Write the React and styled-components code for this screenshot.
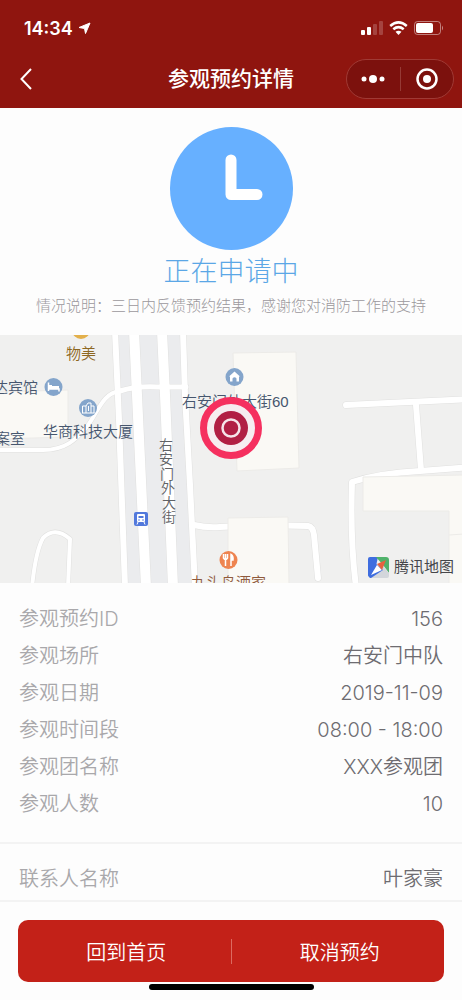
import styled, { createGlobalStyle } from 'styled-components';

const visitInfo = [
  { label: '参观预约ID', value: '156' },
  { label: '参观场所', value: '右安门中队' },
  { label: '参观日期', value: '2019-11-09' },
  { label: '参观时间段', value: '08:00 - 18:00' },
  { label: '参观团名称', value: 'XXX参观团' },
  { label: '参观人数', value: '10' },
];

const contactInfo = [{ label: '联系人名称', value: '叶家豪' }];

// x, baseline of each character of the street name
const streetName = [
  ['右', 166, 115],
  ['安', 166, 129],
  ['门', 167, 144],
  ['外', 168, 158],
  ['大', 169, 173],
  ['街', 169, 187],
];

const roads = [
  { d: 'M-4 115H43C66 115 76 104 86 93C98 78 102 58 120 56', w: 4 },
  { d: 'M32 252C34 232 38 212 43 203Q55 191 70 204L68 252', w: 4 },
  { d: 'M120 56Q136 51 157 52H186', w: 5 },
  { d: 'M115 -4L119 85L125 252', w: 6 },
  { d: 'M134 -4L137 60L146 252', w: 10 },
  { d: 'M162 -4L165 60L173 252', w: 10 },
  { d: 'M183 -4L185 60L190 150L195 252', w: 6 },
  { d: 'M194 190Q206 193 220 192L263 190L308 191Q313 192 314 200L318 243', w: 6 },
  { d: 'M346 70L470 64', w: 6 },
  { d: 'M416 70L421 135', w: 6 },
  { d: 'M470 132L420 136Q380 138 352 147Q350 205 356 252', w: 6 },
];

const MapDrawing = () => (
  <MapSvg viewBox="0 0 462 248" preserveAspectRatio="xMidYMid slice">
    <path fill="#ebecee" d="M115 0H183L195 248H125Z" />
    <g fill="none" stroke="#e0e0df" strokeLinecap="round" strokeLinejoin="round">
      {roads.map(({ d, w }) => (
        <path key={d} d={d} strokeWidth={w + 1} />
      ))}
    </g>
    <g fill="none" stroke="#fff" strokeLinecap="round" strokeLinejoin="round">
      {roads.map(({ d, w }) => (
        <path key={d} d={d} strokeWidth={w} />
      ))}
    </g>
    <g fill="#faf9f5" stroke="#ecebe8">
      <path d="M-2 57L68 55V102L-2 104Z" />
      <path d="M233 18L296 17L299 133L237 136Z" />
      <path d="M228 183L288 182L289 250H228Z" />
      <path d="M363 142L464 140V250H449V176H363Z" />
      <path d="M449 200L464 199" />
    </g>

    <circle cx="81" cy="-5" r="9" fill="#e3b04b" />
    <g fill="#84a5cb">
      <circle cx="53.500" cy="52" r="9" />
      <circle cx="88" cy="73" r="9" />
      <circle cx="234.500" cy="42" r="9" />
    </g>
    <g fill="none" stroke="#fff" strokeWidth="1.500">
      <path d="M48.500 47.500V56M48.500 54H59V56.500" />
      <path fill="#fff" stroke="none" d="M49 50H52V51H59V54H49Z" />
      <path strokeWidth="1" d="M82.500 78V71H86V78M86 71L88 68H91V78M91 71H94V78M82 78H94.500M88.500 71V76" />
      <path fill="#fff" stroke="none" d="M234.500 36.500L240 41.500H239V46.500H236.500V43.500Q234.500 41 232.500 43.500V46.500H230V41.500H229Z" />
    </g>
    <circle cx="228.500" cy="225" r="9" fill="#ee8450" />
    <g stroke="#fff" strokeWidth="1.500" fill="none">
      <path d="M225.500 219V231M223.500 219V223Q225.500 226 227.500 223V219" />
      <path fill="#fff" d="M231 231V219.500Q233.500 221 233 225H231" />
    </g>
    <rect x="134" y="177" width="14" height="14" rx="2" fill="#5279dc" />
    <rect x="137" y="179" width="8" height="8" rx="1" fill="#fff" />
    <path d="M138.500 181H143.500V183H138.500Z" fill="#5279dc" />
    <circle cx="139" cy="185" r="0.800" fill="#5279dc" />
    <circle cx="143" cy="185" r="0.800" fill="#5279dc" />
    <path d="M138 187L137 189.500M144 187L145 189.500" stroke="#fff" />

    <MapLabel x="66" y="24" $color="#8d671f">物美</MapLabel>
    <MapLabel x="-7" y="58">达宾馆</MapLabel>
    <MapLabel x="-5" y="109">案室</MapLabel>
    <MapLabel x="43" y="102">华商科技大厦</MapLabel>
    <MapLabel x="182" y="72">右安门外大街60</MapLabel>
    <MapLabel x="191" y="253" $color="#8f5a3c">九头鸟酒家</MapLabel>
    <StreetLabel textAnchor="middle">
      {streetName.map(([char, x, y]) => (
        <tspan key={char} x={x} y={y}>
          {char}
        </tspan>
      ))}
    </StreetLabel>

    <circle cx="231" cy="93" r="27.500" fill="#f6edf0" stroke="#f5305f" strokeWidth="7" />
    <circle cx="231" cy="93" r="17" fill="#b11f44" />
    <circle cx="231" cy="93" r="8.500" fill="none" stroke="#f6e4e9" strokeWidth="2.500" />
  </MapSvg>
);

const InfoList = ({ items }) =>
  items.map(({ label, value }) => (
    <InfoRow key={label}>
      <InfoLabel>{label}</InfoLabel>
      <InfoValue>{value}</InfoValue>
    </InfoRow>
  ));

const App = () => {
  return (
    <>
      <GlobalStyle />
      <Header>
        <StatusBar>
          <StatusTime>
            14:34
            <svg width="13" height="13" viewBox="0 0 13 13">
              <path
                d="M12 1L7.500 11.500L6.500 6.500L1 5.500Z"
                fill="#fff"
                stroke="#fff"
                strokeLinejoin="round"
              />
            </svg>
          </StatusTime>
          <StatusIcons>
            <svg width="22" height="14" viewBox="0 0 22 14" fill="#fff">
              <rect x="0" y="9" width="4" height="5" rx="1" />
              <rect x="6" y="6" width="4" height="8" rx="1" />
              <rect x="12" y="3" width="4" height="11" rx="1" opacity="0.200" />
              <rect x="18" y="0" width="4" height="14" rx="1" opacity="0.200" />
            </svg>
            <svg width="19" height="14" viewBox="0 0 19 14" fill="none" stroke="#fff">
              <path strokeWidth="2.500" d="M1.200 5Q9.500 -2.200 17.800 5" />
              <path strokeWidth="2.500" d="M4.300 8.300Q9.500 4 14.700 8.300" />
              <path fill="#fff" stroke="none" d="M6.500 10.800Q9.500 8.600 12.500 10.800L9.500 14Z" />
            </svg>
            <svg width="30" height="14" viewBox="0 0 30 14">
              <rect x="0.500" y="0.500" width="26" height="13" rx="3" fill="none" stroke="#fff" opacity="0.450" />
              <rect x="2" y="2" width="17" height="10" rx="2" fill="#fff" />
              <path d="M28 4.500Q30 7 28 9.500Z" fill="#fff" opacity="0.500" />
            </svg>
          </StatusIcons>
        </StatusBar>
        <NavBar>
          <BackButton aria-label="返回">
            <svg width="12" height="22" viewBox="0 0 12 22">
              <path d="M11 1L1.500 11L11 21" fill="none" stroke="#fff" strokeWidth="2" />
            </svg>
          </BackButton>
          <Title>参观预约详情</Title>
          <Capsule>
            <CapsuleButton aria-label="更多">
              <svg width="24" height="10" viewBox="0 0 24 10" fill="#fff">
                <circle cx="3" cy="5" r="2.500" />
                <circle cx="12" cy="5" r="4" />
                <circle cx="21" cy="5" r="2.500" />
              </svg>
            </CapsuleButton>
            <CapsuleLine />
            <CapsuleButton aria-label="关闭">
              <svg width="22" height="22" viewBox="0 0 22 22">
                <circle cx="11" cy="11" r="9.500" fill="none" stroke="#fff" strokeWidth="2.500" />
                <circle cx="11" cy="11" r="4" fill="#fff" />
              </svg>
            </CapsuleButton>
          </Capsule>
        </NavBar>
      </Header>

      <main>
        <StatusSection>
          <svg width="123" height="123" viewBox="0 0 123 123">
            <circle cx="61.500" cy="61.500" r="61.500" fill="#67b0ff" />
            <path
              d="M61 33V67.500H87"
              fill="none"
              stroke="#fff"
              strokeWidth="11"
              strokeLinecap="round"
              strokeLinejoin="round"
            />
          </svg>
          <StatusTitle>正在申请中</StatusTitle>
          <StatusText>情况说明：三日内反馈预约结果，感谢您对消防工作的支持</StatusText>
        </StatusSection>

        <MapSection>
          <MapDrawing />
          <MapBrand>
            <svg width="23" height="23" viewBox="0 0 23 23">
              <path fill="#3f6ddf" d="M3 1H11L9 10L4 22Q1 21 1 18V3Q1 1 3 1Z" />
              <path fill="#4fb26a" d="M9 1H19Q22 1 22 4V17L16 9Z" />
              <path fill="#d3d6db" d="M4 22L16 10L22 17V20Q22 22 20 22Z" />
              <path fill="#3f6ddf" d="M1 14L8 7L16 14L4 22Q1 21 1 18Z" />
              <path fill="#fff" d="M4 19L10 9L15 14Z" />
              <path fill="#e5623f" d="M10 8L19 4L15 14Z" />
            </svg>
            腾讯地图
          </MapBrand>
        </MapSection>

        <VisitList>
          <InfoList items={visitInfo} />
        </VisitList>
        <ContactList>
          <InfoList items={contactInfo} />
        </ContactList>
      </main>

      <ActionBar>
        <ActionButton>回到首页</ActionButton>
        <ActionLine />
        <ActionButton>取消预约</ActionButton>
      </ActionBar>
      <HomeIndicator />
    </>
  );
};

const GlobalStyle = createGlobalStyle`
  * {
    box-sizing: border-box;
  }
  body {
    margin: 0;
    background-color: #fdfdfd;
    font-family: Inter, 'Noto Sans CJK SC', sans-serif;
  }
  svg {
    display: block;
    flex-shrink: 0;
  }
  button {
    padding: 0;
    border: none;
    background: none;
    color: inherit;
    font-family: inherit;
    cursor: pointer;
  }
`;

const Header = styled.header`
  padding-bottom: 6px;
  background-color: #8f150f;
  color: #fff;
`;
const StatusBar = styled.div`
  display: flex;
  justify-content: space-between;
  align-items: center;
  height: 56px;
  padding: 0 18px 0 24px;
`;
const StatusTime = styled.div`
  display: flex;
  align-items: center;
  gap: 5px;
  font-size: 18px;
  font-weight: 600;
`;
const StatusIcons = styled.div`
  display: flex;
  align-items: center;
  gap: 6px;
`;
const NavBar = styled.div`
  display: grid;
  grid-template-columns: 1fr auto 1fr;
  align-items: center;
  height: 46px;
  padding: 0 8px;
`;
const BackButton = styled.button`
  justify-self: start;
  padding: 4px 12px;
`;
const Title = styled.h1`
  margin: 0;
  font-size: 21px;
  font-weight: 500;
  line-height: 30px;
`;
const Capsule = styled.div`
  display: flex;
  align-items: center;
  justify-self: end;
  width: 108px;
  height: 40px;
  border: 1px solid #a03a35;
  border-radius: 20px;
  background-color: #7c110d;
`;
const CapsuleButton = styled.button`
  display: flex;
  flex: 1;
  justify-content: center;
`;
const CapsuleLine = styled.span`
  width: 1px;
  height: 24px;
  background-color: #963a35;
`;

const StatusSection = styled.section`
  display: flex;
  flex-direction: column;
  align-items: center;
  padding: 19px 16px 18px;
`;
const StatusTitle = styled.h2`
  margin: 6px 0 7px;
  color: #5ba7e6;
  font-size: 27px;
  font-weight: 300;
  line-height: 32px;
`;
const StatusText = styled.p`
  margin: 0;
  color: #9b989c;
  font-size: 15px;
  font-weight: 300;
  line-height: 22px;
`;

const MapSection = styled.section`
  position: relative;
  height: 248px;
  background-color: #f0f0ef;
`;
const MapSvg = styled.svg`
  width: 100%;
  height: 100%;
`;
const MapLabel = styled.text`
  fill: ${({ $color }) => $color || '#46566e'};
  font-family: 'Liberation Sans', 'Noto Sans CJK SC', sans-serif;
  font-size: 15px;
  font-weight: 350;
`;
const StreetLabel = styled(MapLabel)`
  fill: #606266;
  font-size: 14px;
`;
const MapBrand = styled.div`
  position: absolute;
  right: 8px;
  bottom: 4px;
  display: flex;
  align-items: center;
  gap: 4px;
  color: #45464a;
  font-size: 15px;
  line-height: 24px;
`;

const VisitList = styled.dl`
  margin: 0;
  padding: 18px 19px 19px;
  border-bottom: 2px solid #f3f3f3;
`;
const ContactList = styled(VisitList)`
  padding: 17px 19px 2px;
`;
const InfoRow = styled.div`
  display: flex;
  justify-content: space-between;
  font-size: 20px;
  line-height: 37px;
`;
const InfoLabel = styled.dt`
  color: #a9a8ab;
  font-weight: 350;
`;
const InfoValue = styled.dd`
  margin: 0;
  color: #6e6c71;
  font-weight: 350;
`;

const ActionBar = styled.div`
  display: flex;
  align-items: center;
  height: 62px;
  margin: 18px 18px 0;
  border-radius: 10px;
  background-color: #c32118;
  color: #fff;
`;
const ActionButton = styled.button`
  flex: 1;
  height: 100%;
  padding-left: 4px;
  font-size: 20px;
  font-weight: 350;
`;
const ActionLine = styled.span`
  width: 1px;
  height: 25px;
  background-color: #dc6a60;
`;
const HomeIndicator = styled.div`
  width: 165px;
  height: 6px;
  margin: 2px auto 8px;
  border-radius: 3px;
  background-color: #000;
`;

export default App;
